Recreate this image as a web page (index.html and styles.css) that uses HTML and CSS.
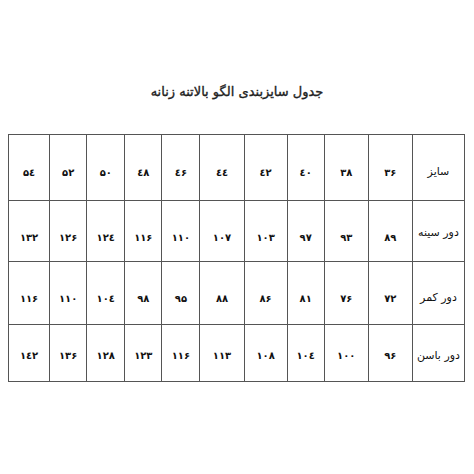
FILE: index.html
```html
<!DOCTYPE html>
<html lang="fa" dir="rtl">
<head>
<meta charset="utf-8">
<link rel="stylesheet" href="styles.css">
</head>
<body>
<div class="page">
  <h1 class="title">جدول سایزبندی الگو بالاتنه زنانه</h1>
  <table class="chart">
    <colgroup>
      <col class="c-label"><col class="c44"><col class="c44"><col class="c37"><col class="c43"><col class="c44"><col class="c38"><col class="c37"><col class="c38"><col class="c37"><col class="c41">
    </colgroup>
    <tr class="r1">
      <td class="label">سایز</td><td>۳۶</td><td>۳۸</td><td>٤۰</td><td>٤۲</td><td>٤٤</td><td>٤۶</td><td>٤۸</td><td>۵۰</td><td>۵۲</td><td>۵٤</td>
    </tr>
    <tr class="r2">
      <td class="label">دور سینه</td><td>۸۹</td><td>۹۳</td><td>۹۷</td><td>۱۰۳</td><td>۱۰۷</td><td>۱۱۰</td><td>۱۱۶</td><td>۱۲٤</td><td>۱۲۶</td><td>۱۳۲</td>
    </tr>
    <tr class="r3">
      <td class="label">دور کمر</td><td>۷۲</td><td>۷۶</td><td>۸۱</td><td>۸۶</td><td>۸۸</td><td>۹۵</td><td>۹۸</td><td>۱۰٤</td><td>۱۱۰</td><td>۱۱۶</td>
    </tr>
    <tr class="r4">
      <td class="label">دور باسن</td><td>۹۶</td><td>۱۰۰</td><td>۱۰٤</td><td>۱۰۸</td><td>۱۱۳</td><td>۱۱۶</td><td>۱۲۳</td><td>۱۲۸</td><td>۱۳۶</td><td>۱٤۲</td>
    </tr>
  </table>
</div>
</body>
</html>
```

FILE: styles.css
```css
html, body {
  margin: 0;
  padding: 0;
  background: #ffffff;
}
body {
  font-family: "DejaVu Sans", "Noto Sans", sans-serif;
  color: #1a1a1a;
}
.page {
  width: 474px;
  height: 474px;
  padding-top: 82px;
  box-sizing: border-box;
}
.title {
  margin: 0 0 32px 0;
  text-align: center;
  font-size: 13px;
  line-height: 20px;
  font-weight: normal;
  -webkit-text-stroke: 0.35px #222;
  color: #222;
}
.chart {
  margin: 0 auto 0 8px;
  width: 457px;
  border-collapse: collapse;
  table-layout: fixed;
}
.chart td {
  border: 1px solid #555;
  text-align: center;
  vertical-align: middle;
  font-size: 10px;
  font-weight: bold;
  letter-spacing: -0.5px;
  padding: 0;
  color: #111;
}
.chart td.label {
  font-weight: normal;
  font-size: 11px;
  letter-spacing: 0;
}
.c-label { width: 52px; }
.c44 { width: 44px; }
.c43 { width: 43px; }
.c38 { width: 38px; }
.c37 { width: 37px; }
.c41 { width: 41px; }
.r1 { height: 66px; }
.r2 { height: 61px; }
.r3 { height: 63px; }
.r4 { height: 57px; }
.r1 td { padding-top: 9px; }
.r1 td.label { padding-top: 7px; }
.r2 td { padding-top: 13px; }
.r2 td.label { padding-top: 2px; }
.r3 td { padding-top: 10px; }
.r3 td.label { padding-top: 9px; }
.r4 td { padding-top: 4px; }
.r4 td.label { padding-top: 5px; }
```
